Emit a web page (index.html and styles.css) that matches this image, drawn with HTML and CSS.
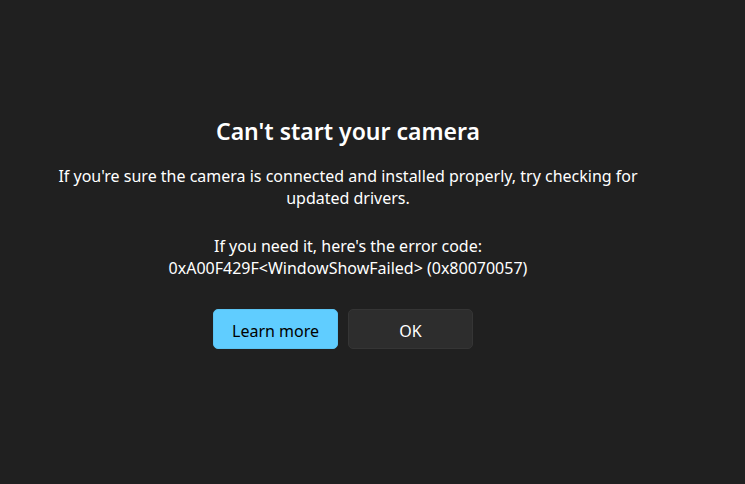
FILE: index.html
```html
<!DOCTYPE html>
<html>
<head lang="en">
    <meta charset="UTF-8">
    <title>Camera</title>
    <link rel="stylesheet" href="styles.css">
</head>
<body>
<div id="page">
    <div id="dialog">
        <h1 class="title">Can't start your camera</h1>
        <p class="msg">If you're sure the camera is connected and installed properly, try checking for updated drivers.</p>
        <p class="msg code">If you need it, here's the error code:<br>0xA00F429F&lt;WindowShowFailed&gt; (0x80070057)</p>
        <div class="buttons">
            <div class="btn primary">Learn more</div>
            <div class="btn">OK</div>
        </div>
    </div>
</div>
</body>
</html>
```

FILE: styles.css
```css
*{
    margin: 0;
    padding: 0;
}
html,body{
    height: 100%;
    background: #202020;
}
body{
    font-family: "Noto Sans", "Open Sans", sans-serif;
    color: #ffffff;
}
#page{
    width: 696px;
    padding-top: 115px;
}
#dialog{
    text-align: center;
}
.title{
    font-size: 23px;
    font-weight: 600;
    line-height: 32px;
}
.msg{
    font-size: 16px;
    line-height: 22px;
    margin-top: 18px;
    padding: 0 38px;
}
.code{
    margin-top: 26px;
}
.buttons{
    display: flex;
    justify-content: center;
    gap: 10px;
    margin-top: 30px;
    padding-right: 10px;
}
.btn{
    width: 125px;
    height: 40px;
    line-height: 38px;
    padding-top: 2px;
    border-radius: 5px;
    background: #2d2d2d;
    border: 1px solid #353535;
    box-sizing: border-box;
    font-size: 16px;
    color: #ffffff;
}
.btn.primary{
    background: #60cdff;
    border-color: #5bc3f2;
    color: #000000;
}
```
